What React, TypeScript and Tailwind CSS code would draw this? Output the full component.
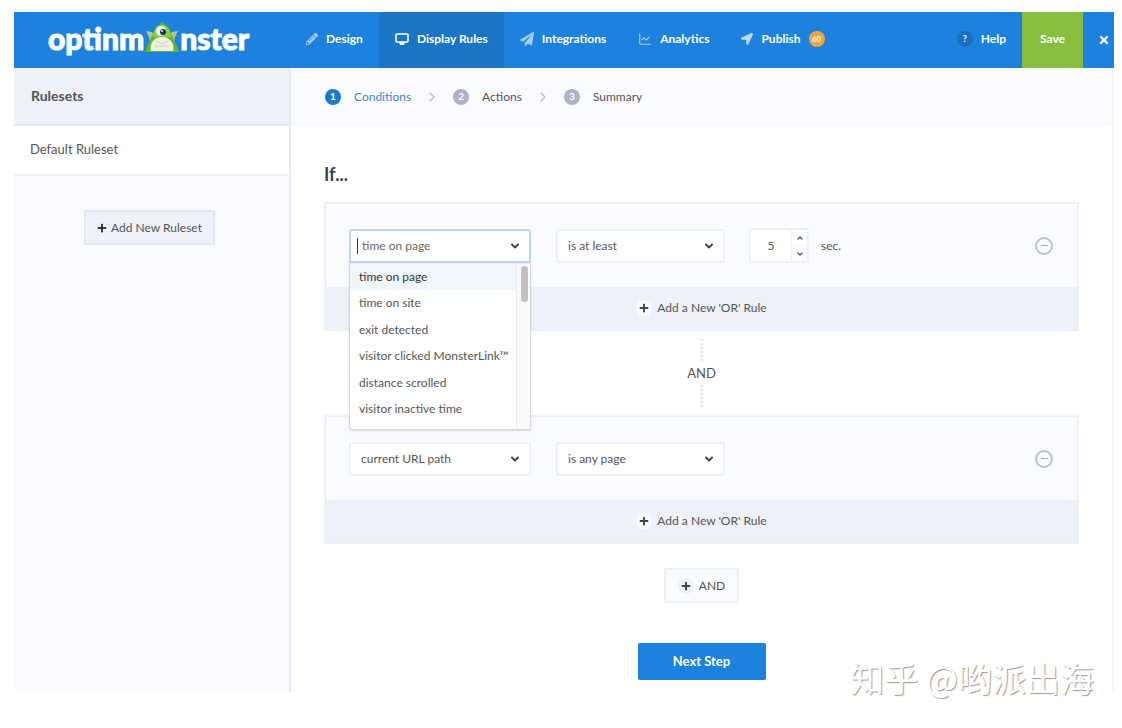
import { useState } from "react"
import type { ComponentType, ReactNode } from "react"
import { FaPlus, FaPaperPlane, FaLocationArrow, FaTimes, FaPencilAlt } from "react-icons/fa"
import { ChevronDown, ChevronRight, ChevronUp, ChartLine } from "lucide-react"

const DisplayIcon = ({ className }: { className?: string }) => (
  <svg viewBox="0 0 14 14" className={className} fill="none" aria-hidden="true">
    <rect x="1" y="2" width="12" height="8" rx="1" stroke="currentColor" strokeWidth="1.6" />
    <path d="M4 10h6l-1 3H5z" fill="currentColor" />
  </svg>
)

type Tab = {
  label: string
  icon: ComponentType<{ className?: string }>
  iconClass: string
  badge?: string
}

const TABS: Tab[] = [
  { label: "Design", icon: FaPencilAlt, iconClass: "size-3 opacity-60" },
  { label: "Display Rules", icon: DisplayIcon, iconClass: "size-[14px]" },
  { label: "Integrations", icon: FaPaperPlane, iconClass: "size-[14px] opacity-60" },
  { label: "Analytics", icon: ChartLine, iconClass: "size-[14px] opacity-60" },
  { label: "Publish", icon: FaLocationArrow, iconClass: "size-3 opacity-70", badge: "60" },
]

const STEPS = ["Conditions", "Actions", "Summary"]

const CONDITIONS = [
  "time on page",
  "time on site",
  "exit detected",
  "visitor clicked MonsterLink™",
  "distance scrolled",
  "visitor inactive time",
]

const Monster = () => (
  <svg viewBox="0 0 36 32" className="h-8 w-9 shrink-0" aria-hidden="true">
    <path d="M2 9l6 1 4 6-6 5-1-6z" fill="#b5c48b" />
    <path d="M34 9l-6 1-4 6 6 5 1-6z" fill="#b5c48b" />
    <path d="M1 30c1-4 3-8 5-12 1-3 3-5 4-9 1-4 3-6 5-6l3-3 3 3c2 0 4 2 5 6 1 4 3 6 4 9 2 4 4 8 5 12z" fill="#62b52d" />
    <path d="M9 15c0-7 4-12 9-12s9 5 9 12z" fill="#86cf3f" />
    <circle cx="17" cy="9" r="5" fill="#e8f4f4" />
    <circle cx="19" cy="10" r="3" fill="#143350" />
    <circle cx="18" cy="9" r="1" fill="#fff" />
    <path d="M7 29c-2-6 2-14 11-14s13 8 11 14z" fill="#eef0e4" />
    <path d="M12 19c4 3 8 3 12 0M11 24h14" fill="none" stroke="#cdd2bd" />
  </svg>
)

const PlusDot = ({ className }: { className: string }) => (
  <span className={`flex size-4 items-center justify-center rounded-full ${className}`}>
    <FaPlus className="size-[10px]" />
  </span>
)

const SelectBox = ({ label, value, width }: { label: string; value: string; width: string }) => (
  <div className={`relative ${width}`}>
    <select aria-label={label} defaultValue={value} className="h-[34px] w-full appearance-none rounded-[3px] border-2 border-[#edf0f8] bg-white pr-8 pl-[10px] text-xs text-[#555]">
      <option>{value}</option>
    </select>
    <ChevronDown className="pointer-events-none absolute top-[11px] right-[10px] size-3 text-[#444]" strokeWidth={4} />
  </div>
)

const ConditionPicker = () => {
  const [value, setValue] = useState(CONDITIONS[0])

  return (
    <div className="relative w-[182px]">
      <input role="combobox" aria-label="Condition" aria-expanded="true" aria-controls="conditions" value={value} onChange={(e) => setValue(e.target.value)} className="h-[34px] w-full rounded-t-[3px] border-2 border-[#b9d8f7] bg-white pl-[11px] text-xs text-[#666] outline-none" />
      <span className="absolute top-[9px] left-2 h-4 w-px bg-[#333]" />
      <ChevronDown className="pointer-events-none absolute top-[11px] right-[10px] size-3 text-[#444]" strokeWidth={4} />

      <div className="absolute top-[34px] right-0 left-0 z-10 flex h-[167px] rounded-b-[3px] border border-[#d5d7da] border-t-[#e4ebf3] bg-white shadow-sm">
        <ul id="conditions" role="listbox" aria-label="Conditions" className="grid h-[159px] flex-1 grid-rows-6">
          {CONDITIONS.map((item) => (
            <li key={item} role="option" aria-selected={item === value} onClick={() => setValue(item)} className={`flex items-center pl-[9px] text-xs whitespace-nowrap ${item === value ? "bg-[#f0f6fe] text-[#333]" : "text-[#555]"}`}>
              {item}
            </li>
          ))}
        </ul>
        <div className="w-[14px] border-l border-[#ececec] bg-[#fafafa] pt-[2px] pl-1">
          <div className="h-9 w-[7px] rounded-full bg-[#c1c1c1]" />
        </div>
      </div>
    </div>
  )
}

const RuleGroup = ({ children }: { children: ReactNode }) => (
  <section className="border-2 border-[#edf0f8] bg-[#fafbff]">
    <div className="flex h-[83px] items-center pr-6 pl-[23px]">
      {children}
      <button aria-label="Remove rule" className="ml-auto flex size-[18px] items-center justify-center rounded-full border-2 border-[#bcc3cb]">
        <span className="h-px w-[7px] bg-[#a2aab3]" />
      </button>
    </div>
    <button className="flex h-[42px] w-full items-center justify-center gap-[5px] bg-[#edf1fa] text-xs text-[#555]">
      <PlusDot className="bg-[#fafbff] text-[#444]" />
      Add a New 'OR' Rule
    </button>
  </section>
)

const Header = () => (
  <header className="flex h-14 overflow-hidden bg-[#1d82dd] text-xs font-bold text-white">
    <a href="#" aria-label="optinmonster" className="flex w-[276px] shrink-0 items-center pb-1 pl-[34px] text-[30px] leading-none font-black [-webkit-text-stroke:1px_white]">
      <span>optinm</span>
      <Monster />
      <span>nster</span>
    </a>

    <nav className="flex">
      {TABS.map(({ label, icon: Icon, iconClass, badge }) => (
        <a key={label} href="#" className={`flex items-center gap-2 px-4 pb-[2px] whitespace-nowrap ${label === "Display Rules" ? "bg-[#1a75c7]" : ""}`}>
          <Icon className={iconClass} />
          {label}
          {badge && <span className="flex size-4 items-center justify-center rounded-full bg-[#f0a63c] text-[8px]">{badge}</span>}
        </a>
      ))}
    </nav>

    <div className="ml-auto flex shrink-0">
      <a href="#" className="flex items-center gap-2 pr-4 pb-[2px]">
        <span className="flex size-4 items-center justify-center rounded-full bg-[#1a70be] text-[9px]">?</span>
        Help
      </a>
      <button className="w-[61px] bg-[#86bf3d] pb-[2px]">Save</button>
      <button aria-label="Close" className="w-[31px] pl-[15px]">
        <FaTimes className="size-3" />
      </button>
    </div>
  </header>
)

const App = () => (
  <div className="relative min-h-screen bg-white pt-3 pr-2 pb-9 pl-[14px] font-[Lato,sans-serif] text-[#555]">
    <Header />

    <div className="flex">
      <aside className="w-[277px] shrink-0 border-r-2 border-[#e6ebf6] bg-[#fafbff]">
        <h2 className="flex h-[58px] items-center border-b-2 border-[#e3e9f5] bg-[#edf1fa] pl-[17px] text-sm font-bold text-[#555]">Rulesets</h2>
        <a href="#" className="flex h-[50px] items-center border-b-2 border-[#f0f3fa] bg-white pl-4 text-[13px]">Default Ruleset</a>
        <button className="mt-[34px] ml-[70px] flex h-[35px] w-[131px] items-center justify-center gap-1 border-2 border-[#e1e7f2] bg-[#edf1fa] text-xs">
          <FaPlus className="size-[10px] text-[#333]" />
          Add New Ruleset
        </button>
      </aside>

      <main className="flex-1 border-r-2 border-[#f5f6fa] pb-3">
        <ol className="flex h-[58px] items-center bg-[#fafbff] pl-[34px] text-xs">
          {STEPS.map((step, idx) => (
            <li key={step} className="flex items-center">
              {idx > 0 && <ChevronRight className="mx-[13px] size-4 text-[#bbb]" strokeWidth={2} />}
              <span className={`mr-[13px] flex size-4 items-center justify-center rounded-full text-[10px] font-bold text-white ${idx === 0 ? "bg-[#1a78cf]" : "bg-[#abb2ca]"}`}>{idx + 1}</span>
              <span className={idx === 0 ? "text-[#3c86cc]" : ""}>{step}</span>
            </li>
          ))}
        </ol>

        <div className="flex flex-col px-[33px] pt-9">
          <h1 className="mb-4 text-lg leading-6 font-bold text-[#37424f]">If...</h1>

          <RuleGroup>
            <ConditionPicker />
            <div className="ml-[25px]">
              <SelectBox label="Comparison" value="is at least" width="w-[169px]" />
            </div>
            <div className="mr-3 ml-6 flex h-[35px] w-[60px] rounded-[3px] border-2 border-[#edf0f8] bg-white">
              <input id="seconds" type="text" inputMode="numeric" defaultValue="5" className="w-10 text-center text-xs outline-none" />
              <div className="flex flex-1 flex-col border-l border-[#edf0f8]">
                <button aria-label="Increase" className="flex flex-1 items-center justify-center border-b border-[#edf0f8]">
                  <ChevronUp className="size-2" strokeWidth={4} />
                </button>
                <button aria-label="Decrease" className="flex flex-1 items-center justify-center">
                  <ChevronDown className="size-2" strokeWidth={4} />
                </button>
              </div>
            </div>
            <label htmlFor="seconds" className="text-xs">sec.</label>
          </RuleGroup>

          <div className="flex h-[84px] flex-col items-center justify-center gap-[2px] text-[13px] leading-5">
            <span className="h-[22px] border-l-2 border-dotted border-[#e2e2e2]" />
            AND
            <span className="h-[22px] border-l-2 border-dotted border-[#e2e2e2]" />
          </div>

          <RuleGroup>
            <SelectBox label="Condition" value="current URL path" width="w-[182px]" />
            <div className="ml-[25px]">
              <SelectBox label="Comparison" value="is any page" width="w-[169px]" />
            </div>
          </RuleGroup>

          <button className="mx-auto mt-6 flex h-[35px] w-[75px] items-center justify-center gap-[5px] border-2 border-[#edf0f8] bg-[#fafbff] text-xs">
            <PlusDot className="bg-[#edf1fa] text-[#444]" />
            AND
          </button>
          <button className="mx-auto mt-10 h-[37px] w-32 rounded-[2px] bg-[#1d82dd] text-[13px] font-bold text-white">Next Step</button>
        </div>
      </main>
    </div>

    <p className="absolute right-7 bottom-7 font-['Noto_Sans_CJK_SC',sans-serif] text-[34px] leading-[44px] text-white [text-shadow:1px_1px_1px_#999]">知乎 @哟派出海</p>
  </div>
)

export default App
